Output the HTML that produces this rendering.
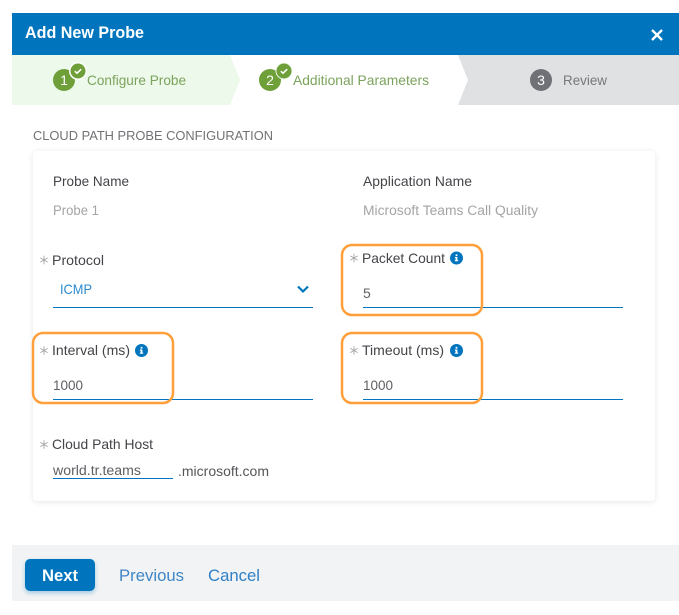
<!DOCTYPE html>
<html><head><meta charset="utf-8"><style>
html,body{margin:0;padding:0;background:#fff;width:679px;height:615px;overflow:hidden}
svg{display:block;font-family:"Liberation Sans",sans-serif}
</style></head><body>
<svg width="679" height="615" viewBox="0 0 679 615" xmlns="http://www.w3.org/2000/svg">
<defs>
<filter id="s" x="-5%" y="-5%" width="110%" height="110%"><feDropShadow dx="0" dy="1" stdDeviation="3" flood-color="#000" flood-opacity=".1"/></filter>
<filter id="b" x="-20%" y="-30%" width="140%" height="160%"><feDropShadow dx="0" dy="2" stdDeviation="2.5" flood-color="#0075be" flood-opacity=".35"/></filter>
<g id="ast" stroke="#a5a6a8" stroke-width=".9" fill="none"><path d="M0-4.2V4.2M-3.7-2.1L3.7 2.1M-3.7 2.1L3.7-2.1"/></g>
<g id="info"><circle r="6.5" fill="#0075be"/><path d="M-.9-3.6h1.8v1.7h-1.8zM-1.6-1h2.5v3.1h.8v1.2h-3.4v-1.2h.8v-1.9h-.7z" fill="#fff"/></g>
</defs>

<rect x="12" y="13" width="667" height="42" fill="#0075be"/>
<text x="25" y="38" font-size="17" font-weight="700" fill="#fff" textLength="119" lengthAdjust="spacingAndGlyphs">Add New Probe</text>
<path d="M652 30L662 40M662 30L652 40" stroke="#fff" stroke-width="2.4" fill="none"/>

<path d="M12 55H230L240 80L230 105H12Z" fill="#edf9ea"/>
<path d="M458 55H679V105H458L468 80Z" fill="#e0e1e3"/>

<circle cx="64" cy="80" r="11" fill="#6e9f38"/>
<text x="64" y="85" font-size="14" fill="#fff" text-anchor="middle">1</text>
<circle cx="78" cy="71" r="9" fill="#fff"/>
<circle cx="78" cy="71" r="7.5" fill="#6e9f38"/>
<path d="M74.8 71.2L77 73.2L81.2 69.2" stroke="#fff" stroke-width="1.6" fill="none"/>
<text x="87" y="85" font-size="14" fill="#7ba35c" textLength="99" lengthAdjust="spacingAndGlyphs">Configure Probe</text>

<circle cx="270" cy="80" r="11" fill="#6e9f38"/>
<text x="270" y="85" font-size="14" fill="#fff" text-anchor="middle">2</text>
<circle cx="284" cy="71" r="8.5" fill="#edf9ea"/>
<circle cx="284" cy="71" r="7.5" fill="#6e9f38"/>
<path d="M280.8 71.2L283 73.2L287.2 69.2" stroke="#fff" stroke-width="1.6" fill="none"/>
<text x="293" y="85" font-size="14" fill="#7ba35c" textLength="136" lengthAdjust="spacingAndGlyphs">Additional Parameters</text>

<circle cx="541" cy="80" r="11" fill="#707176"/>
<text x="541" y="85" font-size="14" fill="#fff" text-anchor="middle">3</text>
<text x="563" y="85" font-size="14" fill="#77787c" textLength="44" lengthAdjust="spacingAndGlyphs">Review</text>

<text x="33" y="140" font-size="12.500" fill="#717276" textLength="240" lengthAdjust="spacingAndGlyphs">CLOUD PATH PROBE CONFIGURATION</text>

<rect x="33" y="151" width="622" height="350" rx="4" fill="#fff" filter="url(#s)"/>

<text x="53" y="186" font-size="14" fill="#434448" textLength="76" lengthAdjust="spacingAndGlyphs">Probe Name</text>
<text x="53" y="215" font-size="13.500" fill="#a3a4a6" textLength="46" lengthAdjust="spacingAndGlyphs">Probe 1</text>
<text x="363" y="186" font-size="14" fill="#434448" textLength="109" lengthAdjust="spacingAndGlyphs">Application Name</text>
<text x="363" y="215" font-size="13.500" fill="#a3a4a6" textLength="175" lengthAdjust="spacingAndGlyphs">Microsoft Teams Call Quality</text>

<use href="#ast" x="44" y="260"/>
<text x="52" y="265" font-size="14" fill="#434448" textLength="52" lengthAdjust="spacingAndGlyphs">Protocol</text>
<text x="60" y="294" font-size="14" fill="#2b8bd0" textLength="32" lengthAdjust="spacingAndGlyphs">ICMP</text>
<path d="M298 286.5L303 291.5L308 286.5" stroke="#0075be" stroke-width="2.200" fill="none"/>
<rect x="53" y="307" width="260" height="1" fill="#0075be"/>

<use href="#ast" x="354" y="258"/>
<text x="362" y="263" font-size="14" fill="#434448" textLength="83" lengthAdjust="spacingAndGlyphs">Packet Count</text>
<use href="#info" x="456.500" y="258"/>
<text x="363" y="298" font-size="14" fill="#5f6064">5</text>
<rect x="363" y="307" width="260" height="1" fill="#0075be"/>

<use href="#ast" x="44" y="350.500"/>
<text x="52" y="355" font-size="14" fill="#434448" textLength="78" lengthAdjust="spacingAndGlyphs">Interval (ms)</text>
<use href="#info" x="141.500" y="350.500"/>
<text x="53" y="390" font-size="14" fill="#5f6064" textLength="30" lengthAdjust="spacingAndGlyphs">1000</text>
<rect x="53" y="399" width="260" height="1" fill="#0075be"/>

<use href="#ast" x="354" y="350.500"/>
<text x="362" y="355" font-size="14" fill="#434448" textLength="82" lengthAdjust="spacingAndGlyphs">Timeout (ms)</text>
<use href="#info" x="456.500" y="350.500"/>
<text x="363" y="390" font-size="14" fill="#5f6064" textLength="30" lengthAdjust="spacingAndGlyphs">1000</text>
<rect x="363" y="399" width="260" height="1" fill="#0075be"/>

<use href="#ast" x="44" y="444.500"/>
<text x="52" y="449" font-size="14" fill="#434448" textLength="101" lengthAdjust="spacingAndGlyphs">Cloud Path Host</text>
<text x="53" y="475" font-size="13.500" fill="#5f6064" textLength="88" lengthAdjust="spacingAndGlyphs">world.tr.teams</text>
<rect x="53" y="478" width="120" height="1" fill="#0075be"/>
<text x="178" y="476" font-size="14" fill="#55565a" textLength="91" lengthAdjust="spacingAndGlyphs">.microsoft.com</text>

<rect x="342" y="245" width="140" height="70" rx="10" fill="none" stroke="#ffa03c" stroke-width="2.500"/>
<rect x="33" y="333" width="140" height="70" rx="10" fill="none" stroke="#ffa03c" stroke-width="2.500"/>
<rect x="342" y="333" width="140" height="70" rx="10" fill="none" stroke="#ffa03c" stroke-width="2.500"/>

<rect x="12" y="545" width="667" height="56" fill="#f2f3f4"/>
<rect x="25" y="559" width="70" height="32" rx="5" fill="#0075be" filter="url(#b)"/>
<text x="42" y="581" font-size="17" font-weight="700" fill="#fff" textLength="36" lengthAdjust="spacingAndGlyphs">Next</text>
<text x="119" y="581" font-size="17" fill="#3f86c6" textLength="65" lengthAdjust="spacingAndGlyphs">Previous</text>
<text x="208" y="581" font-size="17" fill="#2f80c6" textLength="52" lengthAdjust="spacingAndGlyphs">Cancel</text>
</svg>
</body></html>
